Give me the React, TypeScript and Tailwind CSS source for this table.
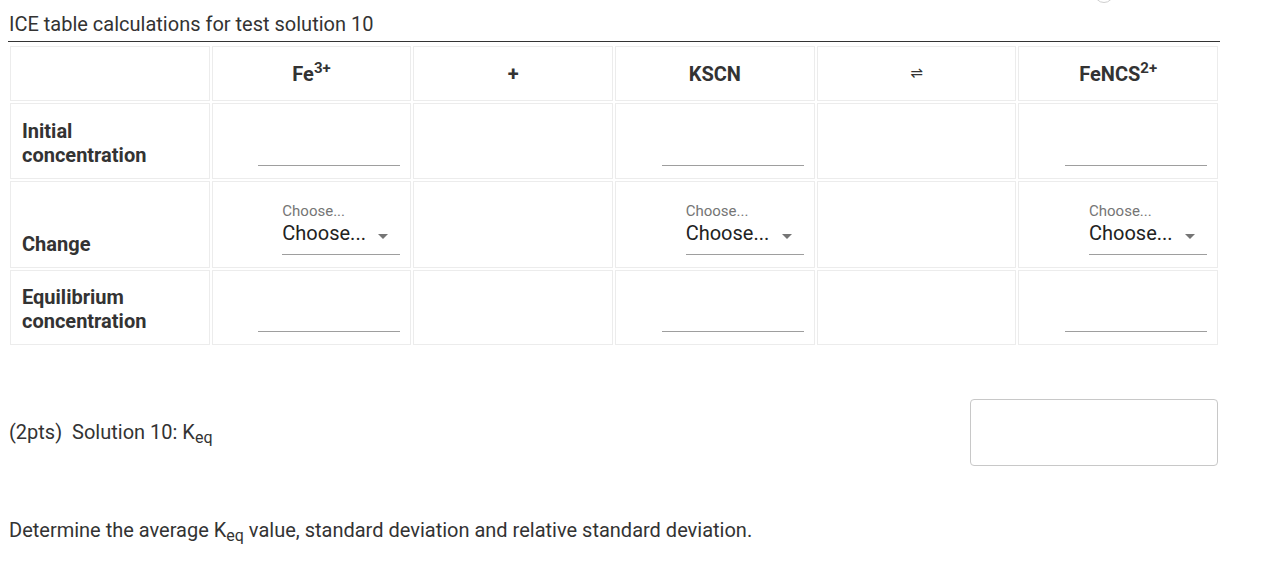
import React from "react";

const font = { fontFamily: "Roboto, 'Liberation Sans', sans-serif" };

function Blank() {
  return (
    <div className="flex h-full items-end justify-end pb-[12px] pr-[10px]">
      <div className="h-px w-[142px] bg-[#9e9e9e]" />
    </div>
  );
}

function Choose() {
  return (
    <div className="flex h-full items-end justify-end pb-[12px] pr-[10px]">
      <div className="flex w-[118px] flex-col border-b border-[#9e9e9e]">
        <span className="text-[15px] leading-4 text-[#757575]">Choose...</span>
        <div className="flex items-center justify-between pb-[9px] pt-[2px]">
          <span className="text-[20px] leading-6 text-[#222]">Choose...</span>
          <span className="mr-[12px] mt-[6px] h-0 w-0 border-x-[5px] border-t-[5px] border-x-transparent border-t-[#757575]" />
        </div>
      </div>
    </div>
  );
}

function Label({ lines }: { lines: string[] }) {
  return (
    <div className="flex h-full flex-col justify-end pb-[11px] pl-[11px] pr-3 text-[20px] font-bold leading-6 text-[#333]">
      {lines.map((l) => (
        <span key={l}>{l}</span>
      ))}
    </div>
  );
}

export default function App() {
  const cell = "border border-[#ececec] bg-white";
  const head = cell + " flex items-center justify-center text-[20px] font-bold text-[#333]";
  return (
    <div className="relative min-h-[572px] w-[1267px] bg-white text-[#333]" style={font}>
      <div className="absolute left-[1094px] top-[-17px] h-[20px] w-[20px] rounded-full border border-[#cfcfcf] bg-white" />
      <div className="pl-[9px] pt-[12px]">
        <div className="text-[20px] leading-6">ICE table calculations for test solution 10</div>
      </div>
      <div className="ml-2 mt-[5px] w-[1212px] border-t border-[#333]" />
      <div className="ml-2 grid w-[1212px] grid-cols-6 gap-[2px] p-[2px] pt-[4px] [grid-template-rows:55px_76px_87px_75px]">
        <div className={cell} />
        <div className={head}>
          <span>
            Fe<sup className="text-[15px]">3+</sup>
          </span>
        </div>
        <div className={head}>+</div>
        <div className={head}>KSCN</div>
        <div className={head}>
          <span className="text-[15px] font-normal" style={{ fontFamily: "'DejaVu Sans', sans-serif" }}>⇌</span>
        </div>
        <div className={head}>
          <span>
            FeNCS<sup className="text-[15px]">2+</sup>
          </span>
        </div>

        <div className={cell}><Label lines={["Initial", "concentration"]} /></div>
        <div className={cell}><Blank /></div>
        <div className={cell} />
        <div className={cell}><Blank /></div>
        <div className={cell} />
        <div className={cell}><Blank /></div>

        <div className={cell}><Label lines={["Change"]} /></div>
        <div className={cell}><Choose /></div>
        <div className={cell} />
        <div className={cell}><Choose /></div>
        <div className={cell} />
        <div className={cell}><Choose /></div>

        <div className={cell}><Label lines={["Equilibrium", "concentration"]} /></div>
        <div className={cell}><Blank /></div>
        <div className={cell} />
        <div className={cell}><Blank /></div>
        <div className={cell} />
        <div className={cell}><Blank /></div>
      </div>

      <div className="mt-[52px] flex w-[1218px] items-center justify-between pl-[9px]">
        <div className="mb-[2px] text-[20px] leading-6">
          (2pts)&nbsp;&nbsp;Solution 10: K<sub className="text-[16px]">eq</sub>
        </div>
        <div className="h-[67px] w-[248px] rounded-[4px] border border-[#c8c8c8]" />
      </div>

      <div className="mt-[52px] pl-[9px] text-[20px] leading-6">
        Determine the average K<sub className="text-[16px]">eq</sub> value, standard deviation and relative standard deviation.
      </div>
    </div>
  );
}
